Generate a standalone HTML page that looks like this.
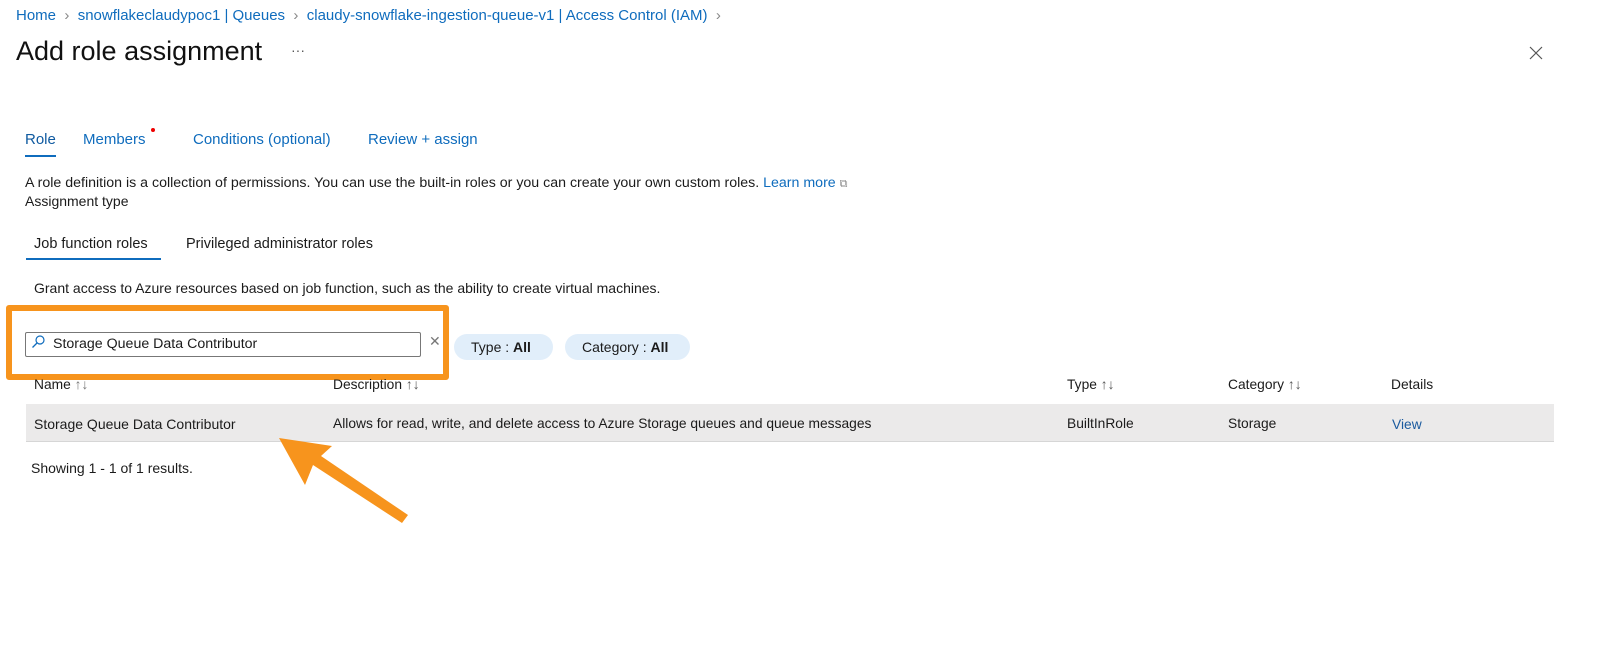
<!DOCTYPE html>
<html><head><meta charset="utf-8"><style>
*{margin:0;padding:0;box-sizing:border-box}
body{width:1600px;height:666px;background:#fff;font-family:"Liberation Sans",sans-serif;color:#1b1b1b;position:relative;overflow:hidden;font-size:14px}
.a{position:absolute;white-space:nowrap}
.blue{color:#0f6cbd}
</style></head><body>
<div class="a blue" style="left:16px;top:7px;font-size:15px">Home <span style="color:#888">&nbsp;›&nbsp;</span> snowflakeclaudypoc1 | Queues <span style="color:#888">&nbsp;›&nbsp;</span> claudy-snowflake-ingestion-queue-v1 | Access Control (IAM) <span style="color:#888">&nbsp;›</span></div>
<div class="a" style="left:16px;top:36px;font-size:27px;color:#111">Add role assignment</div>
<div class="a" style="left:291px;top:42px;font-size:14px;color:#555">···</div>
<svg class="a" style="left:1529px;top:46px" width="14" height="14"><path d="M1 1L13 13M13 1L1 13" stroke="#555" stroke-width="1.2"/></svg>

<div class="a blue" style="left:25px;top:131px;font-size:15px;color:#0f5aa0">Role</div>
<div class="a" style="left:25px;top:155px;width:31px;height:2px;background:#0f6cbd"></div>
<div class="a blue" style="left:83px;top:131px;font-size:15px">Members</div>
<div class="a" style="left:151px;top:128px;width:4px;height:4px;border-radius:50%;background:#e00"></div>
<div class="a blue" style="left:193px;top:131px;font-size:15px">Conditions (optional)</div>
<div class="a blue" style="left:368px;top:131px;font-size:15px">Review + assign</div>

<div class="a" style="left:25px;top:175px;font-size:14.2px">A role definition is a collection of permissions. You can use the built-in roles or you can create your own custom roles. <span class="blue">Learn more</span> <span style="color:#888;font-size:11px">⧉</span></div>
<div class="a" style="left:25px;top:193px;font-size:14px">Assignment type</div>

<div class="a" style="left:34px;top:236px;font-size:14.5px">Job function roles</div>
<div class="a" style="left:26px;top:258px;width:135px;height:2px;background:#0f6cbd"></div>
<div class="a" style="left:186px;top:236px;font-size:14.5px">Privileged administrator roles</div>
<div class="a" style="left:34px;top:280px;font-size:14px">Grant access to Azure resources based on job function, such as the ability to create virtual machines.</div>

<div class="a" style="left:6px;top:305px;width:443px;height:75px;border:6px solid #f7941d;border-radius:3px"></div>
<div class="a" style="left:25px;top:332px;width:396px;height:25px;border:1px solid #777;border-radius:2px"></div>
<svg class="a" style="left:31px;top:335px" width="14" height="14" viewBox="0 0 14 14"><circle cx="9" cy="5" r="4" fill="none" stroke="#0f6cbd" stroke-width="1.2"/><line x1="6" y1="8" x2="1.5" y2="12.5" stroke="#0f6cbd" stroke-width="1.3"/></svg>
<div class="a" style="left:53px;top:336px;font-size:14.2px">Storage Queue Data Contributor</div>
<div class="a" style="left:429px;top:333px;font-size:14px;color:#777">✕</div>
<div class="a" style="left:454px;top:334px;width:99px;height:26px;border-radius:13px;background:#e1eefa;font-size:14px;line-height:26px;padding-left:17px">Type : <b>All</b></div>
<div class="a" style="left:565px;top:334px;width:125px;height:26px;border-radius:13px;background:#e1eefa;font-size:14px;line-height:26px;padding-left:17px">Category : <b>All</b></div>

<div class="a" style="left:34px;top:377px;font-size:13.8px">Name <span style="color:#777">↑↓</span></div>
<div class="a" style="left:333px;top:377px;font-size:13.8px">Description <span style="color:#555">↑↓</span></div>
<div class="a" style="left:1067px;top:377px;font-size:13.8px">Type <span style="color:#555">↑↓</span></div>
<div class="a" style="left:1228px;top:377px;font-size:13.8px">Category <span style="color:#555">↑↓</span></div>
<div class="a" style="left:1391px;top:377px;font-size:13.8px">Details</div>

<div class="a" style="left:26px;top:404px;width:1528px;height:38px;background:#ebeaea;border-bottom:1px solid #d6d6d6"></div>
<div class="a" style="left:34px;top:416px;font-size:14px">Storage Queue Data Contributor</div>
<div class="a" style="left:333px;top:416px;font-size:13.8px">Allows for read, write, and delete access to Azure Storage queues and queue messages</div>
<div class="a" style="left:1067px;top:416px;font-size:13.8px">BuiltInRole</div>
<div class="a" style="left:1228px;top:416px;font-size:13.8px">Storage</div>
<div class="a" style="left:1392px;top:417px;font-size:13.8px;color:#1a5a9e">View</div>
<div class="a" style="left:31px;top:460px;font-size:14px">Showing 1 - 1 of 1 results.</div>

<svg class="a" style="left:0;top:0" width="600" height="600"><polygon points="279,438 332,446 321,456 408,515 402,523 313,465 305,485" fill="#f7941d"/></svg>
</body></html>
